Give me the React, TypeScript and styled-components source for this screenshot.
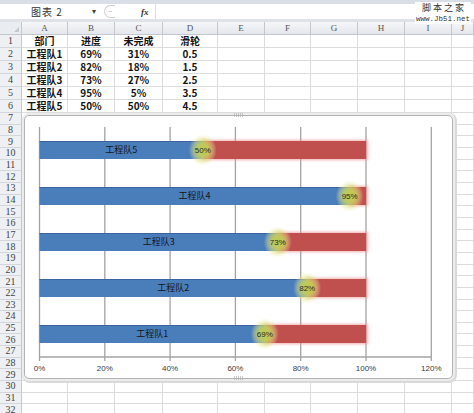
import styled, { createGlobalStyle } from 'styled-components';

const GlobalStyle = createGlobalStyle`
  html, body {
    margin: 0;
    padding: 0;
    background: #fff;
    overflow: hidden;
  }
`;

const COLS = ['A', 'B', 'C', 'D', 'E', 'F', 'G', 'H', 'I', 'J'];
const ROW_COUNT = 32;

const TABLE = [
  ['部门', '进度', '未完成', '滑轮'],
  ['工程队1', '69%', '31%', '0.5'],
  ['工程队2', '82%', '18%', '1.5'],
  ['工程队3', '73%', '27%', '2.5'],
  ['工程队4', '95%', '5%', '3.5'],
  ['工程队5', '50%', '50%', '4.5'],
];

const TEAMS = [
  { name: '工程队5', value: 50 },
  { name: '工程队4', value: 95 },
  { name: '工程队3', value: 73 },
  { name: '工程队2', value: 82 },
  { name: '工程队1', value: 69 },
];

const TICKS = [0, 20, 40, 60, 80, 100, 120];

// plot geometry, relative to the chart box
const X0 = 14.5;
const PX = 3.265;
const PLOT_TOP = 11;
const PLOT_BOTTOM = 241;
const BAND = 46;
const BAR_H = 18;

const xAt = (p: number) => X0 + p * PX;

const BarChart = () => (
  <svg width="427" height="262" viewBox="0 0 427 262">
    <defs>
      <radialGradient id="glow">
        <stop offset="0" stopColor="#b9cc4c" stopOpacity="1" />
        <stop offset="0.4" stopColor="#c6d25a" stopOpacity="0.9" />
        <stop offset="0.7" stopColor="#dfe07e" stopOpacity="0.5" />
        <stop offset="1" stopColor="#f2f0b8" stopOpacity="0" />
      </radialGradient>
      <filter id="soft" x="-10%" y="-50%" width="120%" height="200%">
        <feGaussianBlur stdDeviation="1.6" />
      </filter>
    </defs>

    {TICKS.map((t) => (
      <line
        key={t}
        x1={xAt(t)}
        x2={xAt(t)}
        y1={PLOT_TOP}
        y2={PLOT_BOTTOM + 4}
        stroke="#a3a3a3"
        strokeWidth="1.3"
      />
    ))}
    <line x1={X0} x2={xAt(120)} y1={PLOT_BOTTOM} y2={PLOT_BOTTOM} stroke="#a3a3a3" strokeWidth="1.3" />

    {TEAMS.map((team, i) => {
      const cy = PLOT_TOP + BAND * i + BAND / 2;
      const y = cy - BAR_H / 2;
      const xv = xAt(team.value);
      const xEnd = xAt(100);
      return (
        <g key={team.name}>
          <rect x={xv} y={y - 1} width={xEnd - xv + 2} height={BAR_H + 2} fill="#ee8c8c" opacity="0.7" filter="url(#soft)" />
          <rect x={xv} y={y} width={xEnd - xv} height={BAR_H} fill="#c0504d" />
          <rect x={X0} y={y} width={xv - X0} height={BAR_H} fill="#4a7ebb" />
          <rect x={X0} y={y} width={xv - X0} height={1} fill="#3b63a0" />
          <ellipse cx={xv} cy={cy} rx={14} ry={16} fill="url(#glow)" />
          <text
            x={(X0 + xv) / 2}
            y={cy + 3}
            textAnchor="middle"
            fontSize="9"
            fill="#151515"
            fontFamily="'Noto Sans CJK SC', 'Liberation Sans', sans-serif"
          >
            {team.name}
          </text>
          <text
            x={xv}
            y={cy + 3}
            textAnchor="middle"
            fontSize="8"
            fill="#2a2a2a"
            fontFamily="'Liberation Sans', sans-serif"
          >
            {team.value}%
          </text>
        </g>
      );
    })}

    {TICKS.map((t) => (
      <text
        key={t}
        x={xAt(t)}
        y={255}
        textAnchor="middle"
        fontSize="8"
        fill="#3a3a3a"
        fontFamily="'Liberation Sans', sans-serif"
      >
        {t}%
      </text>
    ))}
  </svg>
);

export default function App() {
  return (
    <>
      <GlobalStyle />
      <Page>
        <RibbonEdge />
        <FormulaBar>
          <NameBox>图表 2</NameBox>
          <DropArrow>▾</DropArrow>
          <ExpandButton>−</ExpandButton>
          <Fx>fx</Fx>
          <FormulaInput />
        </FormulaBar>

        <Sheet>
          <Corner />
          {COLS.map((c) => (
            <ColHead key={c}>{c}</ColHead>
          ))}
          {Array.from({ length: ROW_COUNT }, (_, r) => (
            <Row key={r} r={r} />
          ))}
        </Sheet>

        <ChartFrame>
          <BarChart />
          <Grip $x="50%" $y="-3px" />
          <Grip $x="50%" $y="calc(100% - 2px)" />
        </ChartFrame>

        <Watermark>
          <span className="cn">脚 本 之 家</span>
          <span className="url">www.Jb51.net</span>
        </Watermark>
      </Page>
    </>
  );
}

const Row = ({ r }: { r: number }) => {
  const data = TABLE[r];
  return (
    <>
      <RowHead>{r + 1}</RowHead>
      {COLS.map((c, ci) => (
        <Cell key={c} $bold={!!data}>
          {data && ci < 4 ? data[ci] : ''}
        </Cell>
      ))}
    </>
  );
};

const Page = styled.div`
  position: relative;
  width: 474px;
  height: 413px;
  overflow: hidden;
  background: #fff;
  display: flex;
  flex-direction: column;
  font-family: 'Liberation Sans', 'Noto Sans CJK SC', sans-serif;
`;

const RibbonEdge = styled.div`
  height: 4px;
  background: #d9dee7;
  flex-shrink: 0;
`;

const FormulaBar = styled.div`
  height: 15px;
  display: flex;
  align-items: center;
  background: #fff;
  border-bottom: 3px solid #dfe2e7;
  flex-shrink: 0;
`;

const NameBox = styled.div`
  width: 92px;
  padding-left: 31px;
  box-sizing: border-box;
  font-size: 10px;
  color: #333;
  font-family: 'Noto Sans CJK SC', 'Liberation Sans', sans-serif;
  letter-spacing: 1px;
`;

const DropArrow = styled.div`
  width: 10px;
  font-size: 8px;
  color: #444;
`;

const ExpandButton = styled.div`
  width: 10px;
  height: 11px;
  margin-left: 2px;
  border: 1px solid #c9ccd2;
  border-right: none;
  border-radius: 7px 0 0 7px;
  font-size: 7px;
  line-height: 11px;
  color: #aaa;
  text-align: center;
`;

const Fx = styled.div`
  margin-left: 26px;
  width: 14px;
  font-family: 'Liberation Serif', serif;
  font-style: italic;
  font-weight: 700;
  font-size: 9px;
  color: #333;
`;

const FormulaInput = styled.div`
  flex: 1;
  height: 100%;
  border-left: 1px solid #dadde3;
`;

const Sheet = styled.div`
  display: grid;
  grid-template-columns: 22px 46px 47px 48px 55px 47px 46px 47px 47px 47px 1fr;
  grid-template-rows: 13px repeat(6, 13px) repeat(26, 11.67px);
`;

const Corner = styled.div`
  background: #e9ecf0;
  border-right: 1px solid #c3c7ce;
  border-bottom: 1px solid #c3c7ce;
  position: relative;

  &::after {
    content: '';
    position: absolute;
    right: 2px;
    bottom: 2px;
    border-left: 5px solid transparent;
    border-bottom: 5px solid #c4c8ce;
  }
`;

const ColHead = styled.div`
  background: linear-gradient(#f5f6f8, #e4e7ec);
  border-right: 1px solid #c3c7ce;
  border-bottom: 1px solid #c3c7ce;
  font-family: 'Liberation Serif', serif;
  font-size: 9px;
  line-height: 12px;
  color: #555;
  display: flex;
  align-items: center;
  justify-content: center;
`;

const RowHead = styled.div`
  background: #eef0f3;
  border-right: 1px solid #c3c7ce;
  border-bottom: 1px solid #d3d6db;
  font-family: 'Liberation Serif', serif;
  font-size: 10px;
  line-height: 10px;
  color: #444;
  display: flex;
  align-items: center;
  justify-content: center;
`;

const Cell = styled.div<{ $bold: boolean }>`
  border-right: 1px solid #dcdcdc;
  border-bottom: 1px solid #dcdcdc;
  font-family: 'Noto Sans CJK SC', 'Liberation Sans', sans-serif;
  font-size: 10px;
  line-height: 12px;
  font-weight: ${(p) => (p.$bold ? 700 : 400)};
  color: #151515;
  display: flex;
  align-items: center;
  justify-content: center;
  white-space: nowrap;
`;

const ChartFrame = styled.div`
  position: absolute;
  left: 24px;
  top: 115px;
  width: 427px;
  height: 262px;
  background: #fff;
  border: 1px solid #b3b3b3;
  border-radius: 5px;
  box-shadow: 0 0 0 2px #ececec, 1px 1px 0 3px #d9d9d9;

  svg {
    display: block;
  }
`;

const Grip = styled.span<{ $x: string; $y: string }>`
  position: absolute;
  left: ${(p) => p.$x};
  top: ${(p) => p.$y};
  width: 10px;
  height: 4px;
  margin-left: -5px;
  background: repeating-linear-gradient(90deg, #b0b0b0 0 1px, transparent 1px 2px);
  opacity: 0.7;
`;

const Watermark = styled.div`
  position: absolute;
  right: 3px;
  top: 2px;
  width: 56px;
  display: flex;
  flex-direction: column;
  align-items: center;
  background: #fff;
  color: #333;

  .cn {
    font-family: 'Noto Sans CJK SC', sans-serif;
    font-size: 9px;
    line-height: 12px;
  }

  .url {
    font-family: 'Liberation Mono', monospace;
    font-size: 7.5px;
    line-height: 10px;
  }
`;
